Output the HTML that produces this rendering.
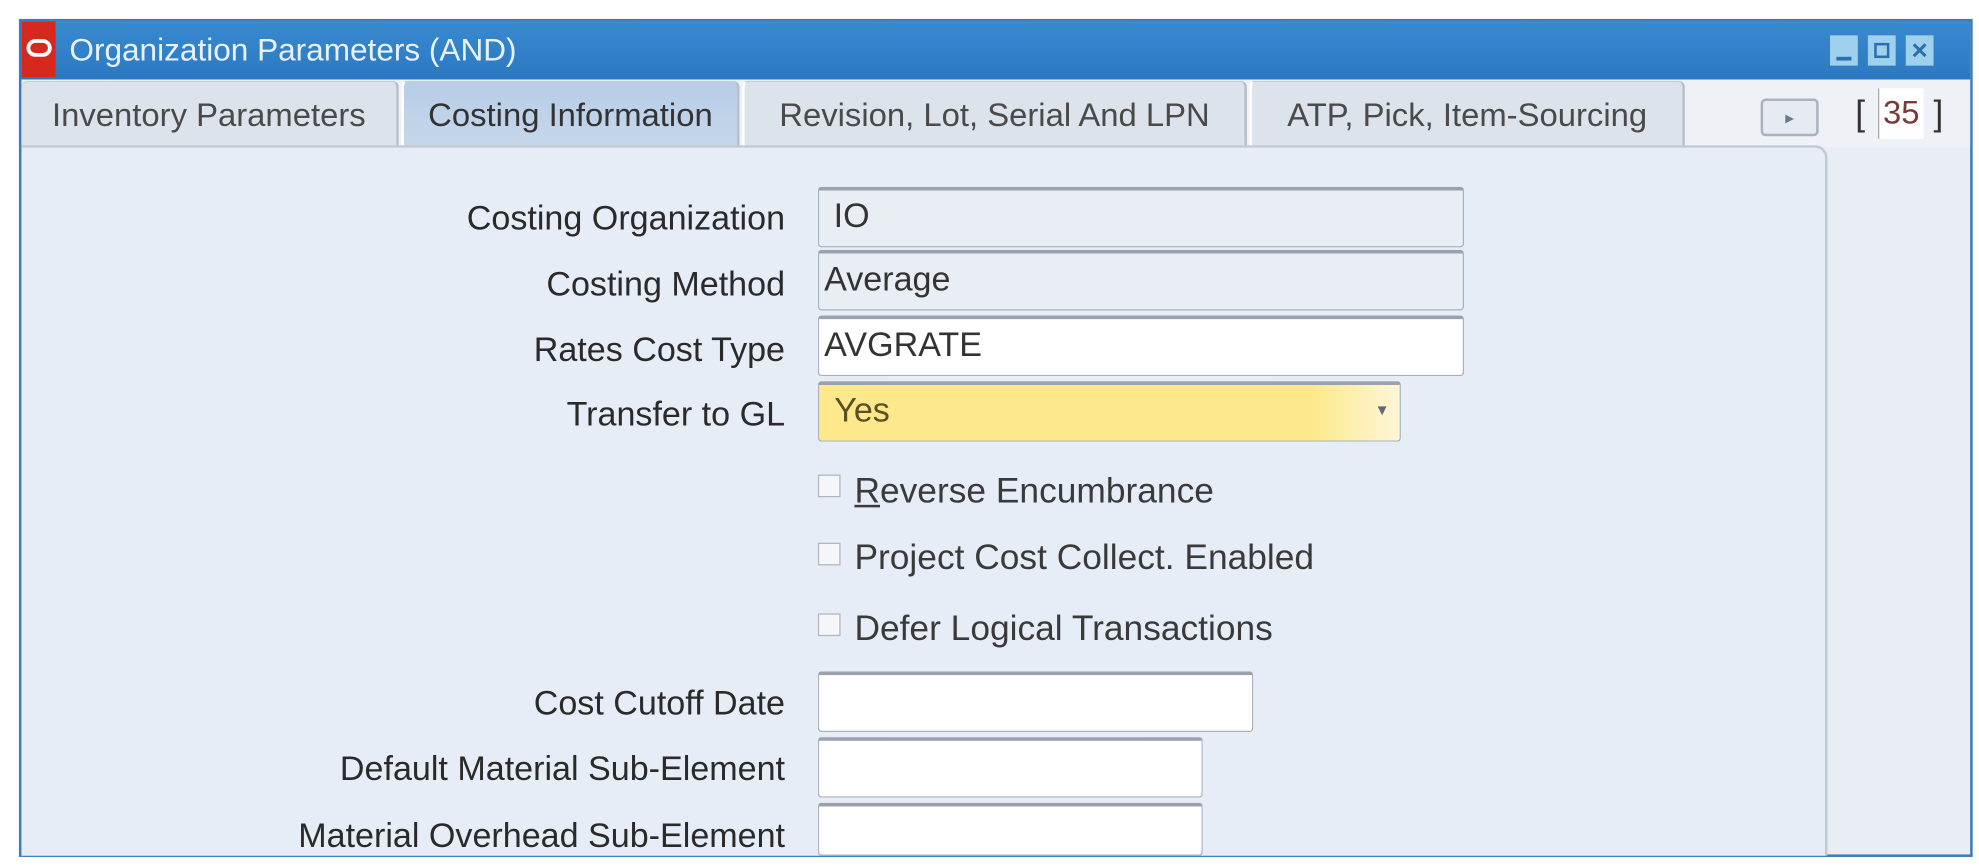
<!DOCTYPE html>
<html><head><meta charset="utf-8"><style>
*{box-sizing:border-box;margin:0;padding:0}
html,body{width:1979px;height:867px;overflow:hidden;background:#fff}
#w{position:absolute;left:0;top:0;width:1568px;height:687px;transform:scale(1.2621);transform-origin:0 0;font-family:"Liberation Sans",Arial,sans-serif}
.a{position:absolute}
.lbl{position:absolute;right:946px;font-size:27px;color:#2a2a2a;white-space:nowrap;line-height:32px}
.fld{position:absolute;border:1px solid #a9b2bc;border-top:3px solid #9aa3ad;border-radius:3px;background:#fff;font-size:27px;color:#333;padding-left:4px;line-height:40px}
.ro{background:#e9eef4}
.tab{position:absolute;top:64px;height:52px;font-size:26px;color:#4a4a4a;line-height:52px;text-align:center;background:#dde3ea;border-top:1px solid #c4ccd6;border-left:2px solid #fff;border-right:2px solid #b6bec8;border-radius:5px 5px 0 0;white-space:nowrap}
.cb{position:absolute;left:648px;width:18px;height:18px;border:1px solid #b0b6bd;background:#f4f6f8}
.ct{position:absolute;left:677px;font-size:28px;color:#3a3a3a;white-space:nowrap;line-height:32px}
</style></head><body><div id="w">
<div class="a" style="left:15px;top:15px;width:1548px;height:664px;border:2px solid #3d7bbd;background:#e9eef5"></div>
<div class="a" style="left:17px;top:17px;width:1544px;height:46px;background:linear-gradient(#3a8ad0,#2b78c0)"></div>
<div class="a" style="left:17px;top:17px;width:27px;height:44px;background:#d6281f"></div>
<div class="a" style="left:21px;top:31px;width:20px;height:14px;border:3px solid #fff;border-radius:7px"></div>
<div class="a" style="left:55px;top:26px;font-size:25px;color:#e8f2ff;white-space:nowrap">Organization Parameters (AND)</div>
<div class="a" style="left:1450px;top:28px;width:22px;height:24px;background:#9fd1ee"></div>
<div class="a" style="left:1455px;top:45px;width:12px;height:3px;background:#2b6fae"></div>
<div class="a" style="left:1480px;top:28px;width:22px;height:24px;background:#9fd1ee"></div>
<div class="a" style="left:1485px;top:34px;width:12px;height:12px;border:2px solid #2b6fae"></div>
<div class="a" style="left:1510px;top:28px;width:22px;height:24px;background:#9fd1ee;color:#2b6fae;font-size:22px;line-height:24px;text-align:center;font-weight:bold">×</div>
<div class="a" style="left:17px;top:63px;width:1544px;height:54px;background:#eef2f7"></div>
<div class="tab" style="left:17px;width:299px;border-left:none">Inventory Parameters</div>
<div class="tab" style="left:318px;width:268px;background:linear-gradient(#b7cde6,#c6d7ea);color:#333">Costing Information</div>
<div class="tab" style="left:588px;width:400px">Revision, Lot, Serial And LPN</div>
<div class="tab" style="left:990px;width:345px">ATP, Pick, Item-Sourcing</div>
<div class="a" style="left:1395px;top:78px;width:46px;height:30px;border:2px solid #aab3bd;border-radius:4px;background:#e6ebf1;color:#6a7a8a;font-size:14px;text-align:center;line-height:26px">▸</div>
<div class="a" style="left:1470px;top:74px;font-size:28px;color:#333">[</div>
<div class="a" style="left:1488px;top:70px;width:36px;height:40px;background:#fff;border-left:1px solid #aaa;font-size:26px;color:#7a3a3a;line-height:38px;padding-left:3px">35</div>
<div class="a" style="left:1532px;top:74px;font-size:28px;color:#333">]</div>
<div class="a" style="left:17px;top:115px;width:1431px;height:563px;background:#e6edf6;border:2px solid #c2cad4;border-left:none;border-bottom:none;border-radius:0 10px 0 0"></div>

<div class="lbl" style="top:157px">Costing Organization</div>
<div class="fld ro" style="left:648px;top:148px;width:512px;height:48px">&nbsp;IO</div>
<div class="lbl" style="top:209px">Costing Method</div>
<div class="fld ro" style="left:648px;top:198px;width:512px;height:48px">Average</div>
<div class="lbl" style="top:261px">Rates Cost Type</div>
<div class="fld" style="left:648px;top:250px;width:512px;height:48px">AVGRATE</div>
<div class="lbl" style="top:312px">Transfer to GL</div>
<div class="fld" style="left:648px;top:302px;width:462px;height:48px;background:linear-gradient(90deg,#fde98c 85%,#fdf6d8);color:#5a5020;padding-left:12px">Yes<span style="position:absolute;right:8px;top:0;font-size:12px;color:#667">▼</span></div>

<div class="cb" style="top:376px"></div><div class="ct" style="top:373px"><u>R</u>everse Encumbrance</div>
<div class="cb" style="top:430px"></div><div class="ct" style="top:426px">Project Cost Collect. Enabled</div>
<div class="cb" style="top:486px"></div><div class="ct" style="top:482px">Defer Logical Transactions</div>

<div class="lbl" style="top:541px">Cost Cutoff Date</div>
<div class="fld" style="left:648px;top:532px;width:345px;height:48px"></div>
<div class="lbl" style="top:593px">Default Material Sub-Element</div>
<div class="fld" style="left:648px;top:584px;width:305px;height:48px"></div>
<div class="lbl" style="top:646px">Material Overhead Sub-Element</div>
<div class="fld" style="left:648px;top:636px;width:305px;height:42px"></div>
</div></body></html>
